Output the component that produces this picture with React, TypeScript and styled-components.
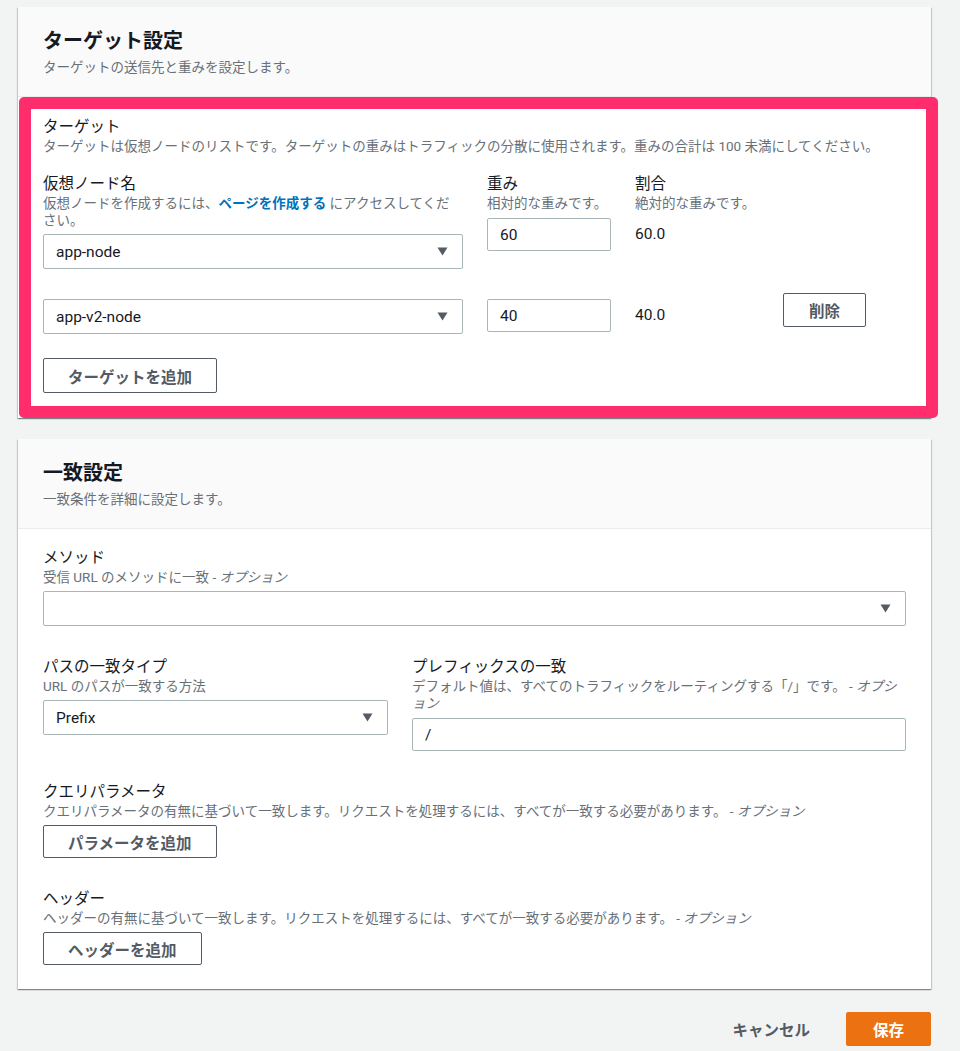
import React from 'react';
import styled, { createGlobalStyle } from 'styled-components';

const GlobalStyle = createGlobalStyle`
    * {
        box-sizing: border-box;
    }
    body {
        margin: 0;
        background: #f2f3f3;
        color: #16191f;
        font-family: Roboto, "Noto Sans CJK JP", sans-serif;
    }
`;

const Page = styled.div`
    padding: 7px 29px 5px 18px;
`;

const Card = styled.section<{ $mt?: number }>`
    margin-top: ${(p) => p.$mt ?? 0}px;
    background: #fff;
    box-shadow: 0 1px 1px 0 rgba(0, 28, 36, 0.3), 1px 1px 1px 0 rgba(0, 28, 36, 0.15),
        -1px 1px 1px 0 rgba(0, 28, 36, 0.15);
`;

const CardHeader = styled.header`
    padding: 20px 25px;
    background: #fafafa;
    border-bottom: 1px solid #eaeded;
`;

const CardTitle = styled.h2`
    margin: 0;
    font-size: 20px;
    line-height: 28px;
    font-weight: 700;
    color: #16191f;
`;

const CardSubtitle = styled.p`
    margin: 4px 0 0;
    font-size: 13.5px;
    line-height: 17px;
    color: #687078;
`;

const CardBody = styled.div`
    padding: 18px 25px 24px;
`;

// pink annotation frame drawn over the card body
const Highlight = styled.div`
    margin: 0 -7px 0 1px;
    padding: 7px 12px 13px;
    border: 12px solid #ff2d6b;
    border-radius: 5px;
    background: #fff;
`;

const FieldBlock = styled.div<{ $mt?: number }>`
    margin-top: ${(p) => p.$mt ?? 0}px;
`;

const Label = styled.div`
    font-size: 15.5px;
    line-height: 22px;
    color: #16191f;
`;

const Hint = styled.div`
    font-size: 13.5px;
    line-height: 17px;
    color: #687078;
`;

const HintLink = styled.a`
    color: #0073bb;
    font-weight: 700;
    text-decoration: none;
`;

const Optional = styled.i`
    font-style: italic;
`;

const SelectBox = styled.div<{ $mt?: number }>`
    display: flex;
    align-items: center;
    justify-content: space-between;
    height: 35px;
    margin-top: ${(p) => p.$mt ?? 0}px;
    padding: 0 14px 0 12px;
    border: 1px solid #aab7b8;
    border-radius: 2px;
    background: #fff;
    font-size: 15.5px;
    color: #16191f;
`;

const TextInput = styled.div<{ $mt?: number }>`
    display: flex;
    align-items: center;
    height: 33px;
    margin-top: ${(p) => p.$mt ?? 0}px;
    padding: 0 12px;
    border: 1px solid #aab7b8;
    border-radius: 2px;
    background: #fff;
    font-size: 15.5px;
    color: #16191f;
`;

const Value = styled.div<{ $mt?: number }>`
    height: 33px;
    margin-top: ${(p) => p.$mt ?? 0}px;
    line-height: 33px;
    font-size: 15.5px;
    color: #16191f;
`;

const TargetRow = styled.div<{ $mt?: number }>`
    display: grid;
    grid-template-columns: 420px 124px 124px auto;
    column-gap: 24px;
    align-items: start;
    margin-top: ${(p) => p.$mt ?? 0}px;
`;

const PathRow = styled.div<{ $mt?: number }>`
    display: grid;
    grid-template-columns: 345px 1fr;
    column-gap: 24px;
    align-items: start;
    margin-top: ${(p) => p.$mt ?? 0}px;
`;

const Button = styled.button<{ $mt?: number; $h?: number }>`
    display: inline-flex;
    align-items: center;
    justify-content: center;
    height: ${(p) => p.$h ?? 33}px;
    margin-top: ${(p) => p.$mt ?? 0}px;
    padding: 0 24px;
    border: 1px solid #545b64;
    border-radius: 2px;
    background: #fff;
    color: #545b64;
    font-family: inherit;
    font-size: 15.5px;
    font-weight: 700;
    cursor: pointer;
`;

const RemoveButton = styled(Button)`
    justify-self: start;
    margin-top: -6px;
    padding: 0 25px;
`;

const Footer = styled.div`
    display: flex;
    justify-content: flex-end;
    align-items: center;
    gap: 18px;
    margin-top: 23px;
`;

const CancelButton = styled.button`
    height: 34px;
    padding: 0 18px;
    border: none;
    background: none;
    color: #545b64;
    font-family: inherit;
    font-size: 15.5px;
    font-weight: 700;
    cursor: pointer;
`;

const PrimaryButton = styled.button`
    height: 34px;
    padding: 0 26px;
    border: 1px solid #ec7211;
    border-radius: 2px;
    background: #ec7211;
    color: #fff;
    font-family: inherit;
    font-size: 15.5px;
    font-weight: 700;
    cursor: pointer;
`;

const Caret = () => (
    <svg width="11" height="9" viewBox="0 0 11 9">
        <path d="M0.5 0.5h10L5.5 8.5z" fill="#545b64" />
    </svg>
);

const Select = ({ value, mt }: { value?: string; mt?: number }) => (
    <SelectBox $mt={mt}>
        <span>{value}</span>
        <Caret />
    </SelectBox>
);

const App = () => (
    <Page>
        <GlobalStyle />
        <Card>
            <CardHeader>
                <CardTitle>ターゲット設定</CardTitle>
                <CardSubtitle>ターゲットの送信先と重みを設定します。</CardSubtitle>
            </CardHeader>
            <Highlight>
                <Label>ターゲット</Label>
                <Hint>
                    ターゲットは仮想ノードのリストです。ターゲットの重みはトラフィックの分散に使用されます。重みの合計は 100 未満にしてください。
                </Hint>
                <TargetRow $mt={18}>
                    <div>
                        <Label>仮想ノード名</Label>
                        <Hint>
                            仮想ノードを作成するには、<HintLink href="#">ページを作成する</HintLink> にアクセスしてください。
                        </Hint>
                        <Select value="app-node" mt={5} />
                    </div>
                    <div>
                        <Label>重み</Label>
                        <Hint>相対的な重みです。</Hint>
                        <TextInput $mt={6}>60</TextInput>
                    </div>
                    <div>
                        <Label>割合</Label>
                        <Hint>絶対的な重みです。</Hint>
                        <Value $mt={6}>60.0</Value>
                    </div>
                </TargetRow>
                <TargetRow $mt={30}>
                    <Select value="app-v2-node" />
                    <TextInput>40</TextInput>
                    <Value>40.0</Value>
                    <RemoveButton $h={34}>削除</RemoveButton>
                </TargetRow>
                <Button $mt={24} $h={35}>
                    ターゲットを追加
                </Button>
            </Highlight>
        </Card>

        <Card $mt={21}>
            <CardHeader>
                <CardTitle>一致設定</CardTitle>
                <CardSubtitle>一致条件を詳細に設定します。</CardSubtitle>
            </CardHeader>
            <CardBody>
                <FieldBlock>
                    <Label>メソッド</Label>
                    <Hint>
                        受信 URL のメソッドに一致 - <Optional>オプション</Optional>
                    </Hint>
                    <Select mt={5} />
                </FieldBlock>
                <PathRow $mt={30}>
                    <div>
                        <Label>パスの一致タイプ</Label>
                        <Hint>URL のパスが一致する方法</Hint>
                        <Select value="Prefix" mt={5} />
                    </div>
                    <div>
                        <Label>プレフィックスの一致</Label>
                        <Hint>
                            デフォルト値は、すべてのトラフィックをルーティングする「/」です。 - <Optional>オプション</Optional>
                        </Hint>
                        <TextInput $mt={6}>/</TextInput>
                    </div>
                </PathRow>
                <FieldBlock $mt={30}>
                    <Label>クエリパラメータ</Label>
                    <Hint>
                        クエリパラメータの有無に基づいて一致します。リクエストを処理するには、すべてが一致する必要があります。 - <Optional>オプション</Optional>
                    </Hint>
                    <Button $mt={5}>パラメータを追加</Button>
                </FieldBlock>
                <FieldBlock $mt={30}>
                    <Label>ヘッダー</Label>
                    <Hint>
                        ヘッダーの有無に基づいて一致します。リクエストを処理するには、すべてが一致する必要があります。 - <Optional>オプション</Optional>
                    </Hint>
                    <Button $mt={5}>ヘッダーを追加</Button>
                </FieldBlock>
            </CardBody>
        </Card>

        <Footer>
            <CancelButton>キャンセル</CancelButton>
            <PrimaryButton>保存</PrimaryButton>
        </Footer>
    </Page>
);

export default App;
